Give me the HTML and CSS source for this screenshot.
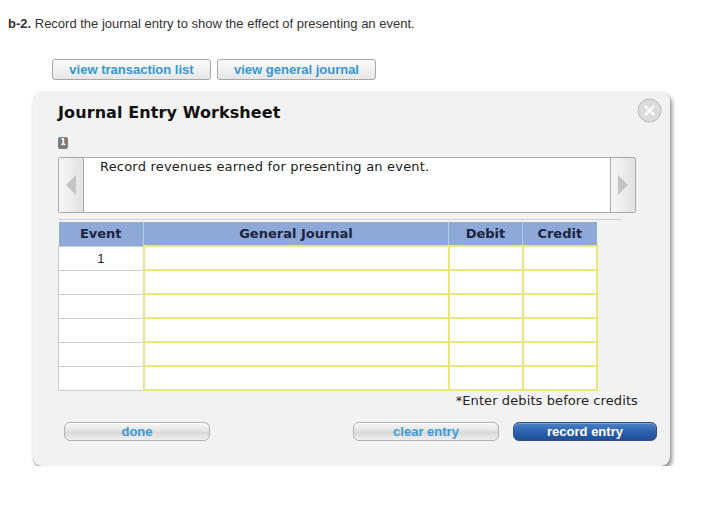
FILE: index.html
```html
<!DOCTYPE html>
<html>
<head>
<meta charset="utf-8">
<link rel="stylesheet" href="styles.css">
</head>
<body>
<p class="prompt"><b>b-2.</b> Record the journal entry to show the effect of presenting an event.</p>
<div class="toolbar">
  <button class="btn-top">view transaction list</button>
  <button class="btn-top">view general journal</button>
</div>
<div class="panel">
  <div class="panel-head">
    <h2 class="title">Journal Entry Worksheet</h2>
    <span class="close"><svg width="25" height="25" viewBox="0 0 25 25"><circle cx="12.5" cy="12.5" r="11.5" fill="#dcdcdc" stroke="#b8b8b8" stroke-width="1"/><path d="M8.5 8.5 L16.5 16.5 M16.5 8.5 L8.5 16.5" stroke="#fff" stroke-width="2.2" stroke-linecap="round"/></svg></span>
  </div>
  <div class="badge">1</div>
  <div class="nav">
    <div class="arrow"><svg width="10" height="20" viewBox="0 0 10 20"><path d="M10 0 L0 10 L10 20 Z" fill="#c4c4c4"/></svg></div>
    <div class="nav-text">Record revenues earned for presenting an event.</div>
    <div class="arrow"><svg width="10" height="20" viewBox="0 0 10 20"><path d="M0 0 L10 10 L0 20 Z" fill="#c4c4c4"/></svg></div>
  </div>
  <div class="divider"></div>
  <table class="journal">
    <colgroup><col class="c-ev"><col class="c-gj"><col class="c-amt"><col class="c-amt"></colgroup>
    <thead>
      <tr><th>Event</th><th>General Journal</th><th>Debit</th><th>Credit</th></tr>
    </thead>
    <tbody>
      <tr><td class="ev">1</td><td class="in"></td><td class="in"></td><td class="in"></td></tr>
      <tr><td class="ev"></td><td class="in"></td><td class="in"></td><td class="in"></td></tr>
      <tr><td class="ev"></td><td class="in"></td><td class="in"></td><td class="in"></td></tr>
      <tr><td class="ev"></td><td class="in"></td><td class="in"></td><td class="in"></td></tr>
      <tr><td class="ev"></td><td class="in"></td><td class="in"></td><td class="in"></td></tr>
      <tr><td class="ev"></td><td class="in"></td><td class="in"></td><td class="in"></td></tr>
    </tbody>
  </table>
  <div class="note">*Enter debits before credits</div>
  <div class="actions">
    <button class="btn-pill">done</button>
    <div class="actions-right">
      <button class="btn-pill">clear entry</button>
      <button class="btn-pill primary">record entry</button>
    </div>
  </div>
</div>
</body>
</html>
```

FILE: styles.css
```css
html, body {
  background: #fff;
}
body {
  margin: 0;
  padding: 16px 8px 0 8px;
  font-family: "Liberation Sans", Arial, sans-serif;
  color: #222;
}
.prompt {
  margin: 0;
  font-size: 13px;
  line-height: 15px;
  color: #333;
}
.toolbar {
  display: flex;
  gap: 6px;
  margin: 28px 0 0 44px;
}
.btn-top {
  width: 159px;
  height: 21px;
  padding: 0;
  border: 1px solid #a8a8a8;
  border-radius: 3px;
  background: linear-gradient(#fbfbfb, #e6e6e6);
  font-family: "Liberation Sans", Arial, sans-serif;
  font-weight: bold;
  font-size: 13px;
  color: #3596d6;
}
.panel {
  margin: 12px 0 0 25px;
  width: 637px;
  box-sizing: border-box;
  padding: 12px 0 25px 25px;
  background: #f2f2f2;
  border-radius: 9px;
  box-shadow: 2px 3px 4px rgba(0,0,0,0.45), 0 0 1px rgba(0,0,0,0.15);
}
.panel-head {
  position: relative;
  height: 17px;
}
.title {
  margin: 0;
  font-family: "DejaVu Sans", Verdana, sans-serif;
  font-size: 16px;
  line-height: 17px;
  letter-spacing: 0.1px;
  font-weight: bold;
  color: #111;
}
.close {
  position: absolute;
  right: 8px;
  top: -6px;
  width: 25px;
  height: 25px;
}
.close svg { display: block; }
.badge {
  margin-top: 16px;
  width: 10px;
  height: 12px;
  background: #7b7b7b;
  border-radius: 2px;
  color: #fff;
  font-family: "DejaVu Sans", Verdana, sans-serif;
  font-size: 8px;
  font-weight: bold;
  line-height: 12px;
  text-align: center;
}
.nav {
  margin-top: 8px;
  width: 578px;
  height: 56px;
  display: flex;
  box-sizing: border-box;
  border: 1px solid #a9a9a9;
  border-radius: 2px;
  background: #fff;
}
.arrow {
  width: 24px;
  flex: none;
  display: flex;
  align-items: center;
  justify-content: center;
  background: linear-gradient(90deg, #f6f6f6, #e2e2e2);
}
.arrow:first-child { border-right: 1px solid #a9a9a9; }
.arrow:last-child { border-left: 1px solid #a9a9a9; }
.nav-text {
  flex: 1;
  padding: 1px 0 0 16px;
  font-family: "DejaVu Sans", Verdana, sans-serif;
  font-size: 13px;
  letter-spacing: 0.2px;
  line-height: 15px;
  color: #222;
}
.divider {
  margin-top: 6px;
  width: 563px;
  height: 1px;
  background: #cfcfcf;
}
.journal {
  margin-top: 2px;
  border-collapse: collapse;
  width: 538px;
  table-layout: fixed;
}
.c-ev { width: 85px; }
.c-gj { width: 305px; }
.c-amt { width: 74px; }
.journal th {
  height: 23px;
  padding: 0;
  background: #8ea9d8;
  color: #1b2440;
  font-family: "DejaVu Sans", Verdana, sans-serif;
  font-size: 13px;
  font-weight: bold;
  border-left: 1px solid #b7c9e6;
}
.journal th:first-child { border-left: none; }
.journal td {
  height: 24px;
  padding: 0;
  box-sizing: border-box;
}
.ev {
  background: #fff;
  border: 1px solid #cccccc;
  text-align: center;
  vertical-align: top;
  padding-top: 4px !important;
  font-family: "Liberation Sans", Arial, sans-serif;
  font-size: 13px;
  color: #222;
}
.in {
  background: #fff;
  border: 2px solid #ece77a;
}
.note {
  width: 580px;
  margin-top: 2px;
  text-align: right;
  font-family: "DejaVu Sans", Verdana, sans-serif;
  font-size: 13px;
  letter-spacing: 0.1px;
  line-height: 15px;
  color: #222;
}
.actions {
  margin: 14px 0 0 6px;
  width: 593px;
  display: flex;
  justify-content: space-between;
}
.actions-right {
  display: flex;
  gap: 14px;
}
.btn-pill {
  width: 146px;
  height: 19px;
  padding: 0;
  border: 1px solid #b0b0b0;
  border-radius: 6px;
  background: linear-gradient(#f7f7f7 0%, #e4e4e4 45%, #d8d8d8 55%, #f0f0f0 100%);
  box-shadow: inset 0 1px 0 #fff;
  font-family: "Liberation Sans", Arial, sans-serif;
  font-weight: bold;
  font-size: 13px;
  line-height: 17px;
  color: #3a9ad9;
}
.btn-pill.primary {
  width: 144px;
  border-color: #2c4f86;
  background: linear-gradient(#4e82c8 0%, #2d62ad 50%, #1e4f97 100%);
  box-shadow: inset 0 1px 0 #7aa3da;
  color: #fff;
}
```
